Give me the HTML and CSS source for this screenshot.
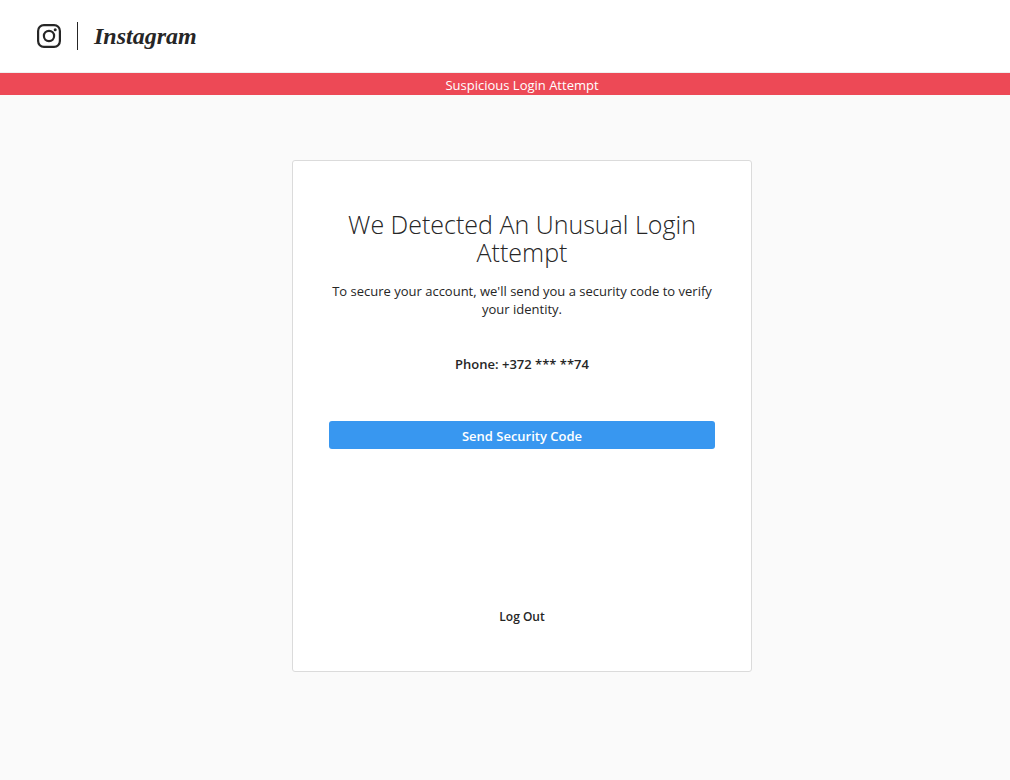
FILE: index.html
```html
<!DOCTYPE html>
<html lang="en">
<head>
    <meta charset="UTF-8">
    <meta name="viewport" content="width=device-width, initial-scale=1.0">
    <link rel="stylesheet" href="styles.css">
    <title>Instagram</title>
</head>
<body>
    <header class="header">
        <a href="#" class="logo">
            <svg class="logo-icon" viewBox="0 0 24 24" aria-hidden="true">
                <rect x="1.1" y="1.1" width="21.8" height="21.8" rx="5.8"/>
                <circle cx="12" cy="12" r="5.1"/>
                <circle class="dot" cx="18.2" cy="5.8" r="1.5"/>
            </svg>
            <span class="logo-line"></span>
            <span class="logo-name">Instagram</span>
        </a>
    </header>

    <div class="alert">Suspicious Login Attempt</div>

    <main class="main">
        <form action="" class="card" method="POST">
            <h2 class="card-heading">We Detected An Unusual Login Attempt</h2>
            <p class="card-text">To secure your account, we'll send you a security code to verify your identity.</p>
            <p class="phone">Phone: +372 *** **74</p>
            <button type="submit" class="send">Send Security Code</button>
            <a href="#" class="logout">Log Out</a>
        </form>
    </main>
</body>
</html>
```
FILE: styles.css
```css
*{
    box-sizing: border-box;
}

body{
    margin: 0;
    min-height: 100vh;
    font-family: "Segoe UI", "Open Sans", sans-serif;
    font-size: 13px;
    line-height: 18px;
    color: #262626;
    background-color: #fafafa;
}

.header{
    display: flex;
    align-items: center;
    height: 73px;
    padding: 0 37px;
    background-color: #fff;
    border-bottom: 1px solid #efefef;
}

.logo{
    display: flex;
    align-items: center;
    gap: 16px;
    color: #262626;
    text-decoration: none;
}

.logo-icon{
    width: 24px;
    height: 24px;
    fill: none;
    stroke: #262626;
    stroke-width: 2.2;
}

.logo-icon .dot{
    fill: #262626;
    stroke: none;
}

.logo-line{
    width: 1px;
    height: 28px;
    background-color: #262626;
}

.logo-name{
    font-family: "Liberation Serif", serif;
    font-size: 24px;
    font-style: italic;
    font-weight: 700;
    line-height: 28px;
}

.alert{
    padding: 3px 0 1px 34px;
    background-color: #ed4956;
    color: #fff;
    text-align: center;
}

.main{
    display: flex;
    justify-content: center;
    padding: 65px 0 65px 34px;
}

.card{
    display: flex;
    flex-direction: column;
    width: 100%;
    max-width: 460px;
    padding: 49px 36px 45px;
    background-color: #fff;
    border: 1px solid #dbdbdb;
    border-radius: 3px;
    text-align: center;
}

.card-heading{
    margin: 0 0 16px;
    font-size: 25px;
    font-weight: 300;
    line-height: 28px;
}

.card-text{
    margin: 0 0 37px;
}

.phone{
    margin: 0 0 48px;
    font-weight: 600;
}

.send{
    height: 28px;
    padding: 2px 8px 0;
    border: none;
    border-radius: 3px;
    background-color: #3897f0;
    color: #fff;
    font: inherit;
    font-weight: 600;
    cursor: pointer;
}

.logout{
    align-self: center;
    margin-top: 159px;
    color: #262626;
    font-size: 12px;
    font-weight: 600;
    text-decoration: none;
}
```
